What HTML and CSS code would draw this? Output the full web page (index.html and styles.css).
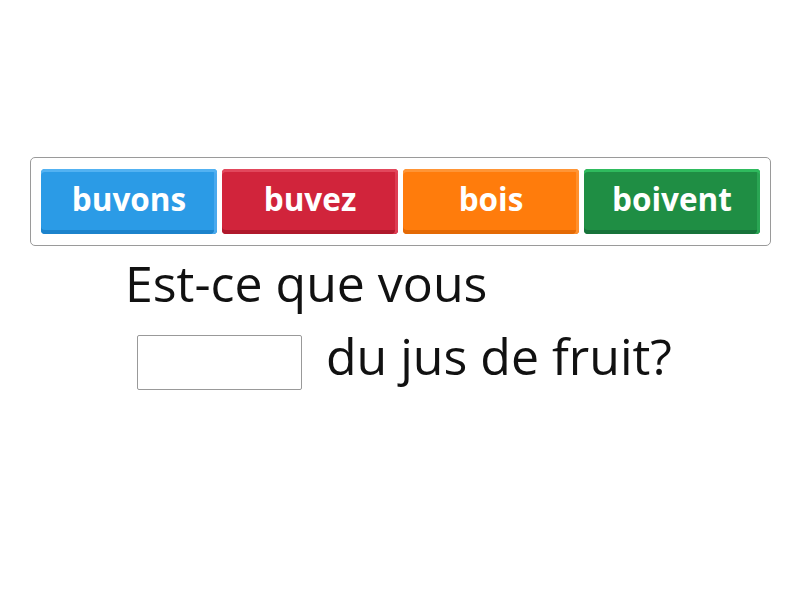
FILE: index.html
```html
<!DOCTYPE html>
<html lang="fr">
<head>
<meta charset="utf-8">
<link rel="stylesheet" href="styles.css">
</head>
<body>
<main class="page">
  <div class="options">
    <div class="opt blue">buvons</div>
    <div class="opt red">buvez</div>
    <div class="opt orange">bois</div>
    <div class="opt green">boivent</div>
  </div>
  <div class="question">
    <div class="line1">Est-ce que vous</div>
    <div class="line2"><span class="blank"></span><span class="rest">du jus de fruit?</span></div>
  </div>
</main>
</body>
</html>
```
FILE: styles.css
```css
html, body {
  margin: 0;
  padding: 0;
  background: #fff;
}
body {
  font-family: "Open Sans", "Liberation Sans", sans-serif;
  width: 800px;
  height: 600px;
  overflow: hidden;
}
.page {
  padding-top: 157px;
  padding-left: 30px;
}
.options {
  box-sizing: border-box;
  width: 741px;
  height: 89px;
  border: 1px solid #9a9a9a;
  border-radius: 5px;
  padding: 11px 10px 10px 10px;
  display: flex;
  gap: 5px;
}
.opt {
  box-sizing: border-box;
  flex: 1 1 0;
  height: 65px;
  border-radius: 4px;
  color: #fff;
  font-weight: 700;
  font-size: 31.5px;
  line-height: 40px;
  display: flex;
  align-items: center;
  justify-content: center;
  padding-bottom: 6px;
}
.blue {
  background: #2b9be6;
  box-shadow: inset 0 3px 0 #52b2f2, inset -3px 0 0 #4aaaee, inset 0 -4px 0 #1c83cc;
}
.red {
  background: #d1243b;
  box-shadow: inset 0 3px 0 #e2475c, inset -3px 0 0 #de3d53, inset 0 -4px 0 #b0192c;
}
.orange {
  background: #ff7c0c;
  box-shadow: inset 0 3px 0 #ff9536, inset -3px 0 0 #ff912e, inset 0 -4px 0 #e46a05;
}
.green {
  background: #1f8e44;
  box-shadow: inset 0 3px 0 #2fbb5e, inset -3px 0 0 #2aa654, inset 0 -4px 0 #17733a;
}
.question {
  padding-left: 95px;
  margin-top: 6px;
  color: #111;
  font-size: 50px;
}
.line1 {
  line-height: 62px;
}
.line2 {
  display: flex;
  align-items: flex-start;
  margin-top: 11px;
}
.blank {
  box-sizing: border-box;
  width: 165px;
  height: 55px;
  border: 1px solid #999;
  border-radius: 2px;
  margin-top: 10px;
  margin-left: 12px;
  margin-right: 24px;
}
.rest {
  line-height: 62px;
}
```
